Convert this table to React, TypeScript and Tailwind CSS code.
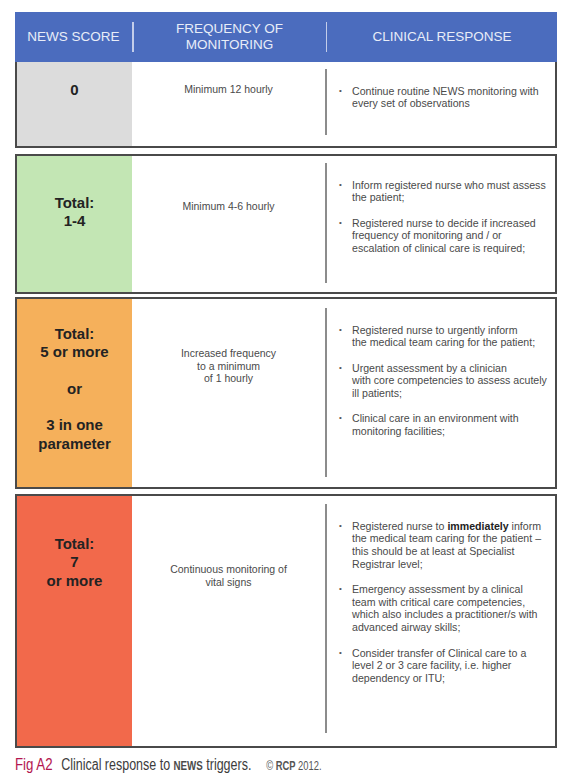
import React from "react";

type Row = {
  h: string;
  top: string;
  border: string;
  bg: string;
  scorePt: string;
  score: React.ReactNode;
  freqPt: string;
  freq: React.ReactNode;
  line: string;
  bullets: React.ReactNode[];
};

const rows: Row[] = [
  {
    h: "h-[86px]",
    top: "",
    border: "border-2 border-t-0",
    bg: "bg-[#dcdcdc]",
    scorePt: "pt-[19px]",
    score: <>0</>,
    freqPt: "pt-[21px]",
    freq: <>Minimum 12 hourly</>,
    line: "mt-[7px] mb-[11px]",
    bullets: [
      <>
        Continue routine NEWS monitoring with
        <br />
        every set of observations
      </>,
    ],
  },
  {
    h: "h-[140px]",
    top: "mt-[6px]",
    border: "border-2",
    bg: "bg-[#c3e6b4]",
    scorePt: "pt-[38px]",
    score: (
      <>
        Total:
        <br />
        1-4
      </>
    ),
    freqPt: "pt-[44px]",
    freq: <>Minimum 4-6 hourly</>,
    line: "mt-[7px] mb-[9px]",
    bullets: [
      <>
        Inform registered nurse who must assess
        <br />
        the patient;
      </>,
      <>
        Registered nurse to decide if increased
        <br />
        frequency of monitoring and / or
        <br />
        escalation of clinical care is required;
      </>,
    ],
  },
  {
    h: "h-[192px]",
    top: "mt-[3px]",
    border: "border-2",
    bg: "bg-[#f5b05b]",
    scorePt: "pt-[26px]",
    score: (
      <>
        Total:
        <br />5 or more
        <br />
        <br />
        or
        <br />
        <br />3 in one
        <br />
        parameter
      </>
    ),
    freqPt: "pt-[48px]",
    freq: (
      <>
        Increased frequency
        <br />
        to a minimum
        <br />
        of 1 hourly
      </>
    ),
    line: "mt-[9px] mb-[10px]",
    bullets: [
      <>
        Registered nurse to urgently inform
        <br />
        the medical team caring for the patient;
      </>,
      <>
        Urgent assessment by a clinician
        <br />
        with core competencies to assess acutely
        <br />
        ill patients;
      </>,
      <>
        Clinical care in an environment with
        <br />
        monitoring facilities;
      </>,
    ],
  },
  {
    h: "h-[254px]",
    top: "mt-[5px]",
    border: "border-2",
    bg: "bg-[#f2694b]",
    scorePt: "pt-[39px]",
    score: (
      <>
        Total:
        <br />7
        <br />
        or more
      </>
    ),
    freqPt: "pt-[67px]",
    freq: (
      <>
        Continuous monitoring of
        <br />
        vital signs
      </>
    ),
    line: "mt-[8px] mb-[13px]",
    bullets: [
      <>
        Registered nurse to <b className="font-bold text-[#222]">immediately</b> inform
        <br />
        the medical team caring for the patient –
        <br />
        this should be at least at Specialist
        <br />
        Registrar level;
      </>,
      <>
        Emergency assessment by a clinical
        <br />
        team with critical care competencies,
        <br />
        which also includes a practitioner/s with
        <br />
        advanced airway skills;
      </>,
      <>
        Consider transfer of Clinical care to a
        <br />
        level 2 or 3 care facility, i.e. higher
        <br />
        dependency or ITU;
      </>,
    ],
  },
];

const App: React.FC = () => {
  return (
    <div
      className="min-h-[778px] bg-white pt-[12px] pl-[15px]"
      style={{ fontFamily: "'Liberation Sans', Arial, sans-serif" }}
    >
      <div className="w-[542px]">
        {/* Header */}
        <div className="flex h-[50px] items-center bg-[#4b6cbe] text-[13.5px] text-[#e8edf8]">
          <div className="flex w-[117px] justify-center">NEWS SCORE</div>
          <div className="h-[30px] w-[1.5px] bg-[#c3cdea]" />
          <div className="flex flex-1 justify-center text-center leading-[16px]">
            FREQUENCY OF
            <br />
            MONITORING
          </div>
          <div className="h-[30px] w-[1.5px] bg-[#c3cdea]" />
          <div className="flex w-[230px] justify-center">CLINICAL RESPONSE</div>
        </div>

        {/* Rows */}
        {rows.map((r, i) => (
          <div key={i} className={`flex ${r.h} ${r.top} ${r.border} border-[#4a4a4a] bg-white`}>
            <div
              className={`w-[115px] ${r.bg} ${r.scorePt} text-center text-[15px] font-bold leading-[18.3px] text-[#232323]`}
            >
              {r.score}
            </div>
            <div
              className={`w-[193px] ${r.freqPt} text-center text-[10.5px] leading-[12.7px] text-[#4a4a4a]`}
            >
              {r.freq}
            </div>
            <div className={`flex-1 ${r.line} border-l-2 border-[#8c8c8c] pt-[15.5px] pl-[12px]`}>
              <div className="flex flex-col gap-[12.7px] text-[10.6px] leading-[12.7px] text-[#4a4a4a]">
                {r.bullets.map((b, j) => (
                  <div key={j} className="flex whitespace-nowrap">
                    <span className="w-[13px] shrink-0 text-[8px] text-[#555]">•</span>
                    <span>{b}</span>
                  </div>
                ))}
              </div>
            </div>
          </div>
        ))}

        {/* Caption */}
        <div className="mt-[5px] h-[20px] whitespace-nowrap">
          <div className="inline-flex origin-left scale-x-[0.78] items-baseline text-[16px] leading-[20px]">
            <span className="text-[17px] text-[#b3164f]">Fig A2</span>
            <span className="ml-[11px] text-[#3c3c3c]">
              Clinical response to <span className="text-[12.5px] font-bold text-[#4a4a4a]">NEWS</span> triggers.
            </span>
            <span className="ml-[19px] text-[12px] text-[#555]">
              © <span className="font-bold">RCP</span> 2012.
            </span>
          </div>
        </div>
      </div>
    </div>
  );
};

export default App;
